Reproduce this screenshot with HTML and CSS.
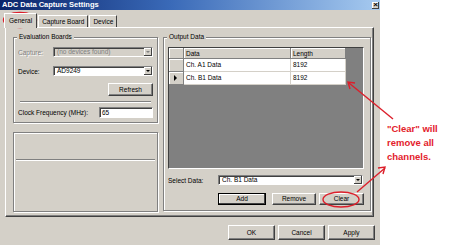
FILE: index.html
```html
<!DOCTYPE html>
<html>
<head>
<meta charset="utf-8">
<link rel="stylesheet" href="styles.css">
</head>
<body>
<div class="page">
  <div class="window">
    <div class="titlebar">
      <span class="title">ADC Data Capture Settings</span>
      <span class="close">×</span>
    </div>
    <div class="tabs">
      <div class="tab active">General</div>
      <div class="tab">Capture Board</div>
      <div class="tab">Device</div>
    </div>
    <div class="panel">
      <div class="leftcol">
        <div class="group g1">
          <span class="legend">Evaluation Boards</span>
          <div class="row first">
            <span class="lbl disabled">Capture:</span>
            <div class="combo off"><span class="ctext">(no devices found)</span><span class="drop"></span></div>
          </div>
          <div class="row">
            <span class="lbl">Device:</span>
            <div class="combo"><span class="ctext">AD9249</span><span class="drop"></span></div>
          </div>
          <div class="row end">
            <div class="btn refresh">Refresh</div>
          </div>
          <div class="sep"></div>
          <div class="row clock">
            <span class="lbl wide">Clock Frequency (MHz):</span>
            <div class="textbox">65</div>
          </div>
        </div>
        <div class="group g2">
          <div class="sep sep2"></div>
        </div>
      </div>
      <div class="group g3">
        <span class="legend">Output Data</span>
        <div class="grid">
          <div class="grow ghead">
            <div class="rh"></div>
            <div class="cell c1 hc">Data</div>
            <div class="cell c2 hc">Length</div>
          </div>
          <div class="grow">
            <div class="rh"></div>
            <div class="cell c1">Ch. A1 Data</div>
            <div class="cell c2">8192</div>
          </div>
          <div class="grow">
            <div class="rh"><span class="tri"></span></div>
            <div class="cell c1">Ch. B1 Data</div>
            <div class="cell c2">8192</div>
          </div>
        </div>
        <div class="row sel">
          <span class="lbl sl">Select Data:</span>
          <div class="combo wide"><span class="ctext">Ch. B1 Data</span><span class="drop"></span></div>
        </div>
        <div class="actions">
          <div class="btn add">Add</div>
          <div class="btn remove">Remove</div>
          <div class="btn clear">Clear</div>
        </div>
      </div>
    </div>
    <div class="footer">
      <div class="btn fbtn">OK</div>
      <div class="btn fbtn">Cancel</div>
      <div class="btn fbtn">Apply</div>
    </div>
  </div>
  <div class="note">"Clear" will<br>remove all<br>channels.</div>
</div>
<svg class="marks" width="474" height="245" viewBox="0 0 474 245">
  <g fill="none" stroke="#dc1f2b" stroke-width="1.4">
    <ellipse cx="20" cy="20" rx="16.5" ry="7.5"/>
    <ellipse cx="341" cy="199.5" rx="18" ry="7.5"/>
    <line x1="393" y1="119" x2="349" y2="83"/>
    <polyline points="350,89 348,82 355,83"/>
    <line x1="357" y1="192" x2="385" y2="168"/>
    <polyline points="378,168 385,167 383,174"/>
  </g>
</svg>
</body>
</html>
```
FILE: styles.css
```css
html, body { margin: 0; padding: 0; background: #fff; }
body {
  width: 474px; height: 245px; overflow: hidden; position: relative;
  font-family: "Liberation Sans", Arial, sans-serif; font-size: 6.5px; color: #000;
}
.page { display: flex; }
.window {
  width: 380px; height: 245px; background: #d4d0c8;
  display: flex; flex-direction: column;
}
.titlebar {
  height: 10px; display: flex; align-items: center; justify-content: space-between;
  background: linear-gradient(to right, #0a246a 0%, #3a6ab8 45%, #a6caf0 100%);
}
.title { color: #fff; font-weight: bold; font-size: 7.5px; padding-left: 2px; line-height: 10px; }
.close {
  width: 7px; height: 7px; margin-right: 1px; background: #d4d0c8; color: #000;
  font-size: 8px; line-height: 6px; text-align: center; font-weight: bold;
  box-shadow: inset -1px -1px 0 #404040, inset 1px 1px 0 #fff;
}
.tabs { display: flex; align-items: flex-end; height: 15px; margin-top: 2px; padding-left: 5px; position: relative; z-index: 1; }
.tab {
  height: 12px; line-height: 12px; padding: 0 3px; margin-right: 1px;
  border-top: 1px solid #fff; border-left: 1px solid #fff; border-right: 1px solid #404040;
  box-sizing: border-box;
}
.tab.active { height: 15px; margin-bottom: -1px; background: #d4d0c8; line-height: 13px; padding: 0 4px; margin-left: -1px; }
.panel {
  margin-left: 5px; width: 369px; height: 190px; box-sizing: border-box;
  border-top: 1px solid #fff; border-left: 1px solid #fff;
  border-right: 1px solid #404040; border-bottom: 1px solid #404040;
  box-shadow: inset -1px -1px 0 #808080;
  display: flex; padding: 9px 0 0 7px; gap: 5px;
}
.leftcol { display: flex; flex-direction: column; gap: 9px; width: 145px; }
.group {
  position: relative; box-sizing: border-box;
  border: 1px solid #808080; box-shadow: inset 1px 1px 0 #fff, 1px 1px 0 #fff;
}
.legend {
  position: absolute; top: -5px; left: 3px; padding: 0 2px; background: #d4d0c8;
  line-height: 8px;
}
.g1 { height: 86px; padding: 0 4px 0 4px; }
.g2 { height: 80px; padding-top: 26px; }
.g3 { width: 208px; height: 174px; padding: 9px 0 0 4px; }
.row { display: flex; align-items: center; margin-top: 9px; }
.row.first { margin-top: 9px; }
.row.end { justify-content: flex-end; margin-top: 7px; }
.lbl { width: 35px; flex: none; }
.lbl.wide { width: 81px; }
.lbl.disabled { color: #808080; text-shadow: 1px 1px 0 #fff; }
.combo {
  width: 100px; height: 10px; box-sizing: border-box; background: #fff; display: flex;
  border-top: 1px solid #808080; border-left: 1px solid #808080;
  border-right: 1px solid #fff; border-bottom: 1px solid #fff;
  box-shadow: inset 1px 1px 0 #404040;
}
.combo.off { background: #d4d0c8; color: #808080; }
.combo.wide { width: 145px; }
.ctext { flex: 1; line-height: 8px; padding-left: 3px; overflow: hidden; white-space: nowrap; }
.drop {
  width: 8px; height: 8px; background: #d4d0c8; position: relative;
  box-shadow: inset -1px -1px 0 #404040, inset 1px 1px 0 #fff;
}
.drop::after {
  content: ""; position: absolute; left: 2px; top: 3px;
  border-left: 2px solid transparent; border-right: 2px solid transparent; border-top: 2px solid #000;
}
.combo.off .drop::after { border-top-color: #808080; }
.btn {
  height: 13px; box-sizing: border-box; background: #d4d0c8; text-align: center; line-height: 12px;
  border-top: 1px solid #fff; border-left: 1px solid #fff;
  border-right: 1px solid #404040; border-bottom: 1px solid #404040;
  box-shadow: inset -1px -1px 0 #808080;
}
.refresh { width: 45px; }
.sep { height: 1px; margin: 5px 2px 0 2px; background: #808080; box-shadow: 0 1px 0 #fff; }
.sep2 { margin: 0 2px; }
.row.clock { margin-top: 5px; }
.textbox {
  width: 54px; height: 11px; box-sizing: border-box; background: #fff; line-height: 9px; padding-left: 2px;
  border-top: 1px solid #808080; border-left: 1px solid #808080;
  border-right: 1px solid #fff; border-bottom: 1px solid #fff;
  box-shadow: inset 1px 1px 0 #404040;
}
.grid {
  width: 196px; height: 122px; background: #808080; box-sizing: border-box;
  border-top: 1px solid #404040; border-left: 1px solid #404040;
  border-right: 1px solid #fff; border-bottom: 1px solid #fff;
}
.grow { display: flex; height: 13px; }
.grow.ghead { height: 11px; }
.rh {
  width: 15px; flex: none; background: #d4d0c8; box-sizing: border-box; position: relative;
  box-shadow: inset -1px -1px 0 #808080, inset 1px 1px 0 #fff;
}
.tri {
  position: absolute; left: 5px; top: 3px;
  border-top: 3px solid transparent; border-bottom: 3px solid transparent; border-left: 3px solid #000;
}
.cell {
  background: #fff; box-sizing: border-box; padding-left: 2px; line-height: 12px;
  border-right: 1px solid #d4d0c8; border-bottom: 1px solid #d4d0c8;
}
.c1 { width: 107px; }
.c2 { width: 55px; }
.hc {
  background: #d4d0c8; border: none; line-height: 11px;
  box-shadow: inset -1px -1px 0 #808080, inset 1px 1px 0 #fff;
}
.row.sel { margin-top: 6px; }
.lbl.sl { width: 50px; }
.actions { display: flex; margin-top: 8px; padding-left: 50px; }
.actions .btn { height: 12px; line-height: 10px; }
.add { width: 48px; border-color: #000; box-shadow: inset -1px -1px 0 #404040, inset 1px 1px 0 #fff; }
.remove { width: 44px; margin-left: 6px; }
.clear { width: 45px; margin-left: 3px; }
.footer { display: flex; justify-content: flex-end; gap: 3px; margin-top: 8px; padding-right: 5px; }
.fbtn { width: 47px; height: 15px; line-height: 13px; }
.note {
  padding: 122px 0 0 7px; color: #e3212b; font-weight: bold; font-size: 9.5px; line-height: 14px;
  font-family: "Liberation Sans", Arial, sans-serif;
}
.marks { position: absolute; left: 0; top: 0; pointer-events: none; }
```
